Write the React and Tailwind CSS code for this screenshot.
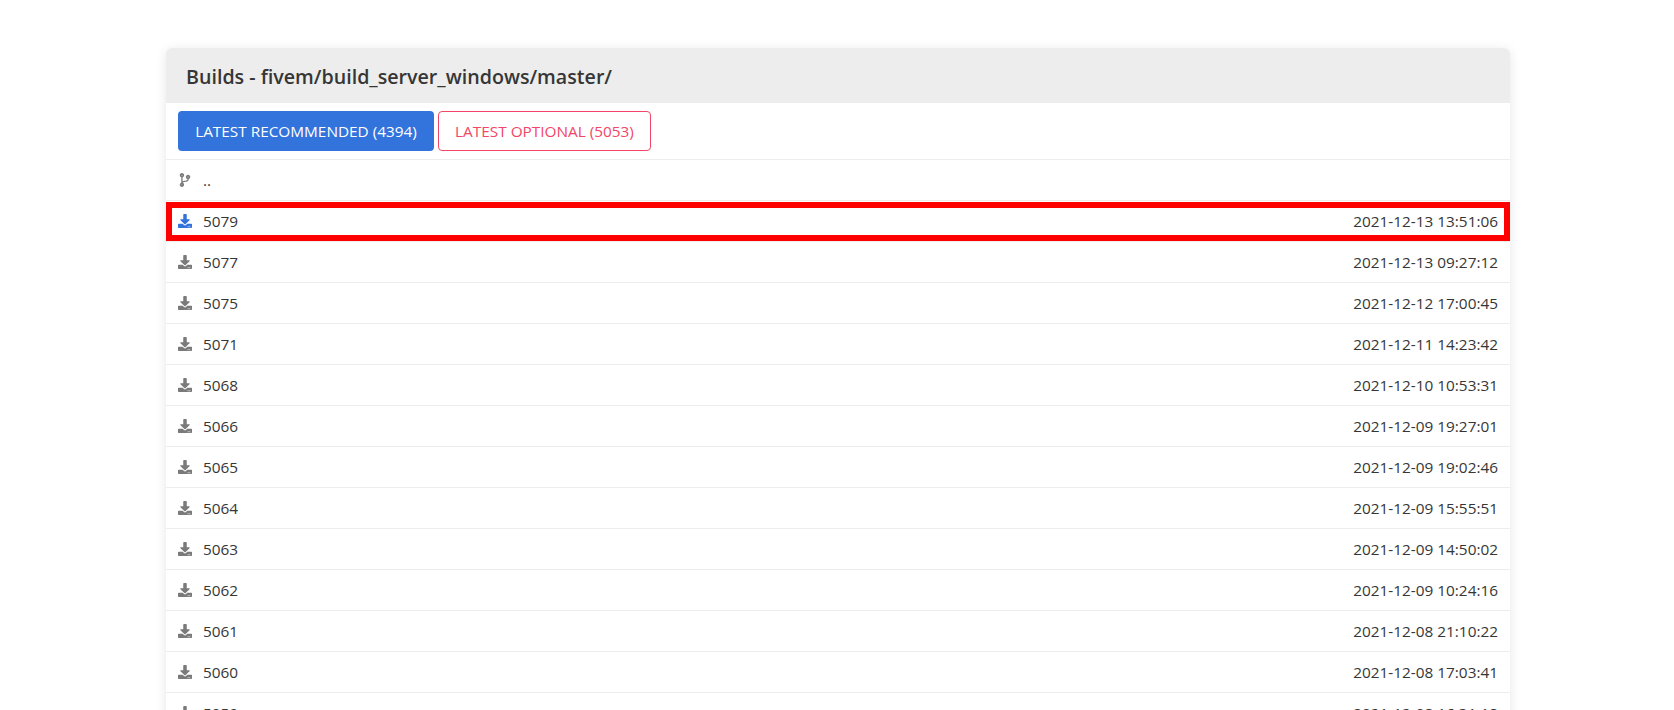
import { FaCodeBranch, FaDownload } from 'react-icons/fa';

const builds = [
  ['5079', '2021-12-13 13:51:06'],
  ['5077', '2021-12-13 09:27:12'],
  ['5075', '2021-12-12 17:00:45'],
  ['5071', '2021-12-11 14:23:42'],
  ['5068', '2021-12-10 10:53:31'],
  ['5066', '2021-12-09 19:27:01'],
  ['5065', '2021-12-09 19:02:46'],
  ['5064', '2021-12-09 15:55:51'],
  ['5063', '2021-12-09 14:50:02'],
  ['5062', '2021-12-09 10:24:16'],
  ['5061', '2021-12-08 21:10:22'],
  ['5060', '2021-12-08 17:03:41'],
  ['5059', '2021-12-08 16:31:18'],
];

function BuildRow({ id, date, highlighted }) {
  return (
    <a className="relative flex h-[41px] items-center justify-between border-t border-[#ededed] px-3 text-[15.35px] text-[#363636]">
      <span className="flex items-center">
        <FaDownload className={`mr-[11px] h-[14px] w-[14px] ${highlighted ? 'text-[#3273dc]' : 'text-[#7a7a7a]'}`} />
        <span className="pt-[2px]">{id}</span>
      </span>
      <span className="pt-[2px]">{date}</span>
      {highlighted && <span className="absolute inset-x-0 top-px bottom-0 border-x-[6px] border-y-[6px] border-[#ff0000]" />}
    </a>
  );
}

export default function App() {
  return (
    <div className="h-screen overflow-hidden bg-white pt-12 font-['Open_Sans','Noto_Sans',sans-serif]">
      <div className="ml-[166px] w-[1344px] rounded-md bg-white shadow-[0_2px_12px_rgba(10,10,10,0.1)]">
        <div className="flex h-[55px] items-center rounded-t-md bg-[#ededed] px-5 pt-[2px] text-[19.65px] font-semibold text-[#363636]">
          Builds - fivem/build_server_windows/master/
        </div>
        <div className="flex h-14 items-center gap-1 px-3 text-[15.35px]">
          <button className="h-10 w-[256px] rounded bg-[#3273dc] pt-[2px] text-white">LATEST RECOMMENDED (4394)</button>
          <button className="h-10 w-[213px] rounded border border-[#f14668] pt-[2px] text-[#f14668]">LATEST OPTIONAL (5053)</button>
        </div>
        <div className="flex h-[41px] items-center border-t border-[#ededed] px-3 text-[15.35px] text-[#363636]">
          <FaCodeBranch className="mr-[11px] h-[14px] w-[14px] text-[#7a7a7a]" />
          <span className="pt-[2px]">..</span>
        </div>
        {builds.map(([id, date], i) => (
          <BuildRow key={id} id={id} date={date} highlighted={i === 0} />
        ))}
      </div>
    </div>
  );
}
